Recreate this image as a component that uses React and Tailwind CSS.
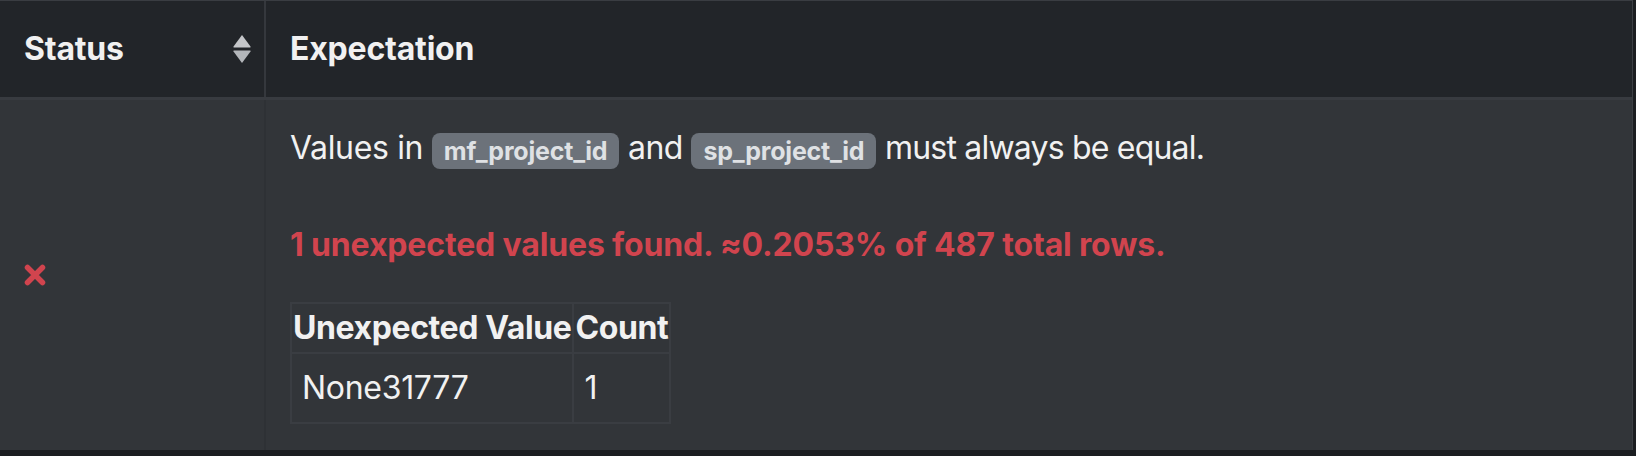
import React from "react";

function SortIcon() {
  return (
    <svg width="20" height="30" viewBox="0 0 20 30" className="shrink-0">
      <path d="M10 1 L18.5 12.5 Q19 13.5 18 13.5 L2 13.5 Q1 13.5 1.5 12.5 Z" fill="#c4c6c9" />
      <path d="M10 29 L18.5 17.5 Q19 16.5 18 16.5 L2 16.5 Q1 16.5 1.5 17.5 Z" fill="#b3b6ba" />
    </svg>
  );
}

function XIcon() {
  return (
    <svg width="22" height="22" viewBox="0 0 22 22">
      <path d="M3.5 3.5 L18.5 18.5 M18.5 3.5 L3.5 18.5" stroke="#d1444e" strokeWidth="5.5" strokeLinecap="round" />
    </svg>
  );
}

function Badge({ children }) {
  return (
    <span className="inline-block rounded-[8px] bg-[#6c727a] px-[12px] py-[6px] align-[-1px] text-[25px] font-bold leading-[24px] tracking-[-0.2px] text-[#dfe1e4]">
      {children}
    </span>
  );
}

export default function App() {
  return (
    <div
      className="h-[456px] w-full bg-[#1c1e21] text-[#f1f1f1]"
      style={{ fontFamily: "Inter, 'Noto Sans', sans-serif" }}
    >
      <div className="w-[1633px] border-r border-[#3c3f44]">
        {/* Header */}
        <div className="flex h-[100px] border-t border-[#3a3d42] border-b-[3px] border-b-[#383b40] bg-[#222529]">
          <div className="flex w-[266px] items-center justify-between border-r-2 border-[#35383d] pl-[24px] pr-[12px]">
            <span className="text-[32px] font-bold leading-[48px] tracking-[-0.2px]">Status</span>
            <SortIcon />
          </div>
          <div className="flex flex-1 items-center pl-[24px]">
            <span className="text-[32px] font-bold leading-[48px] tracking-[-0.2px]">Expectation</span>
          </div>
        </div>
        {/* Body row */}
        <div className="flex h-[350px] bg-[#323539]">
          <div className="flex w-[266px] items-center border-r-2 border-[#2e3135] pl-[24px]">
            <XIcon />
          </div>
          <div className="flex-1 pl-[24px] pt-[24px]">
            <p className="text-[32px] leading-[48px] tracking-[-0.35px]">
              Values in <Badge>mf_project_id</Badge> <span className="tracking-[-0.6px]">and</span>{" "}
              <Badge>sp_project_id</Badge> <span className="tracking-[-0.8px]">must always be equal.</span>
            </p>
            <p className="mt-[49px] text-[32px] font-bold leading-[48px] tracking-[-0.15px] text-[#d1444e]">
              1 unexpected values found. ≈0.2053% of 487 total rows.
            </p>
            <table className="mt-[33px] border-collapse text-[32px] leading-[48px]">
              <thead>
                <tr>
                  <th className="border-2 border-[#3a3d42] px-[1px] py-0 text-left font-bold tracking-[-0.4px]">Unexpected Value</th>
                  <th className="border-2 border-[#3a3d42] px-[1px] py-0 text-left font-bold tracking-[-0.4px]">Count</th>
                </tr>
              </thead>
              <tbody>
                <tr>
                  <td className="border-2 border-[#3a3d42] px-[10px] py-[10px] tracking-[-0.3px]">None31777</td>
                  <td className="border-2 border-[#3a3d42] px-[10px] py-[10px]">1</td>
                </tr>
              </tbody>
            </table>
          </div>
        </div>
      </div>
    </div>
  );
}
